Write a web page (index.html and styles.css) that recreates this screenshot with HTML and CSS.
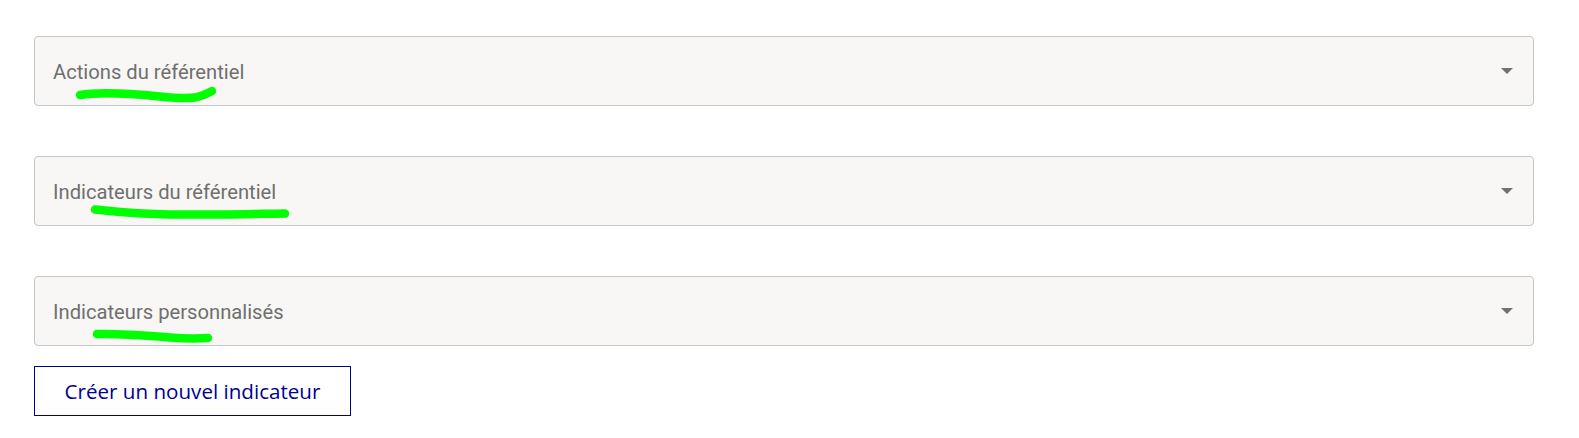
FILE: index.html
```html
<!DOCTYPE html>
<html lang="fr">
<head>
<meta charset="utf-8">
<title>Référentiel</title>
<link rel="stylesheet" href="styles.css">
</head>
<body>
<main class="page">
  <div class="select"><span class="select-label">Actions du référentiel</span><span class="caret"></span></div>
  <div class="select"><span class="select-label">Indicateurs du référentiel</span><span class="caret"></span></div>
  <div class="select select-last"><span class="select-label">Indicateurs personnalisés</span><span class="caret"></span></div>
  <div class="actions"><button class="btn" type="button">Créer un nouvel indicateur</button></div>
  <svg class="marks" width="1579" height="438" viewBox="0 0 1579 438" aria-hidden="true">
    <path d="M80 95 C 95 92.5, 125 93, 160 96.5 S 200 97.5, 212 91"/>
    <path d="M95 209.5 C 115 211.5, 135 214, 170 214.5 S 250 214, 285 213.5"/>
    <path d="M97 334 C 130 333.5, 150 336, 170 337.5 S 200 338.5, 208 338"/>
  </svg>
</main>
</body>
</html>
```
FILE: styles.css
```css
html, body {
  margin: 0;
  padding: 0;
  background: #ffffff;
}
.page {
  position: relative;
  display: flex;
  flex-direction: column;
  padding: 36px 0 0 34px;
  width: 1500px;
}
.select {
  box-sizing: border-box;
  height: 70px;
  display: flex;
  align-items: center;
  justify-content: space-between;
  padding: 0 20px 0 18px;
  background: #f8f7f5;
  border: 1px solid #c5c5c5;
  border-radius: 4px;
  margin-bottom: 50px;
}
.select-last {
  margin-bottom: 20px;
}
.select-label {
  font-family: Roboto, "Liberation Sans", sans-serif;
  font-size: 20.2px;
  color: #6f6f6f;
  padding-top: 1px;
}
.caret {
  width: 0;
  height: 0;
  border-left: 6px solid transparent;
  border-right: 6px solid transparent;
  border-top: 6px solid #717171;
}
.actions {
  display: flex;
}
.btn {
  box-sizing: border-box;
  width: 317px;
  height: 50px;
  background: #ffffff;
  border: 1px solid #000091;
  color: #000091;
  font-family: "Open Sans", "Noto Sans", sans-serif;
  font-size: 20.6px;
  padding: 0;
  cursor: pointer;
}
.marks {
  position: absolute;
  left: 0;
  top: 0;
  pointer-events: none;
}
.marks path {
  fill: none;
  stroke: #00ff00;
  stroke-width: 8.5;
  stroke-linecap: round;
  stroke-linejoin: round;
}
```
